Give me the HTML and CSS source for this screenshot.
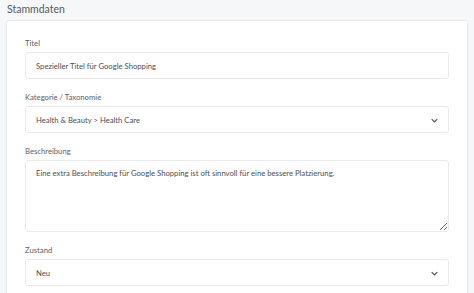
FILE: index.html
```html
<!DOCTYPE html>
<html lang="de">
<head>
    <meta charset="UTF-8">
    <meta name="viewport" content="width=device-width, initial-scale=1.0">
    <title>Stammdaten</title>
    <link rel="stylesheet" href="styles.css">
</head>
<body>

    <div class="section-title">Stammdaten</div>

    <div class="card">
        <div class="field">
            <label class="field-label" for="titel">Titel</label>
            <input class="field-input" id="titel" type="text" value="Spezieller Titel für Google Shopping">
        </div>

        <div class="field">
            <label class="field-label" for="kategorie">Kategorie / Taxonomie</label>
            <div class="select-wrap">
                <select class="field-input field-select" id="kategorie">
                    <option>Health &amp; Beauty &gt; Health Care</option>
                </select>
                <svg class="chevron" viewBox="0 0 10 6" width="7" height="5"><path d="M1 1l4 4 4-4" fill="none" stroke="#555" stroke-width="1.8"/></svg>
            </div>
        </div>

        <div class="field">
            <label class="field-label" for="beschreibung">Beschreibung</label>
            <textarea class="field-input field-textarea" id="beschreibung">Eine extra Beschreibung für Google Shopping ist oft sinnvoll für eine bessere Platzierung.</textarea>
        </div>

        <div class="field">
            <label class="field-label" for="zustand">Zustand</label>
            <div class="select-wrap">
                <select class="field-input field-select" id="zustand">
                    <option>Neu</option>
                </select>
                <svg class="chevron" viewBox="0 0 10 6" width="7" height="5"><path d="M1 1l4 4 4-4" fill="none" stroke="#555" stroke-width="1.8"/></svg>
            </div>
        </div>
    </div>

</body>
</html>
```

FILE: styles.css
```css
* {
    margin: 0;
    padding: 0;
    box-sizing: border-box;
}

body {
    font-family: Lato, 'Open Sans', sans-serif;
    background-color: #f6f7f9;
    color: #4a4f55;
    padding: 0 6px;
}

.section-title {
    font-size: 10.5px;
    color: #555a60;
    padding: 3px 1px 0;
    height: 20px;
}

.card {
    background: #fff;
    border: 1px solid #e8eaed;
    border-radius: 3px;
    padding: 16px 18px 0;
}

.field {
    display: flex;
    flex-direction: column;
    margin-bottom: 12px;
}

.field-label {
    font-size: 7.7px;
    color: #5c6167;
    margin-bottom: 3px;
    line-height: 12px;
}

.field-input {
    font-family: inherit;
    font-size: 7.7px;
    color: #4a4f55;
    background: #fff;
    border: 1px solid #e8eaed;
    border-radius: 3px;
    padding: 0 10px;
    height: 27px;
    width: 100%;
    outline: none;
}

.select-wrap {
    position: relative;
}

.field-select {
    appearance: none;
    -webkit-appearance: none;
}

.chevron {
    position: absolute;
    right: 11px;
    top: 12px;
    pointer-events: none;
}

.field-textarea {
    height: 72px;
    padding: 6px 10px;
    resize: vertical;
    line-height: 12px;
}
```
